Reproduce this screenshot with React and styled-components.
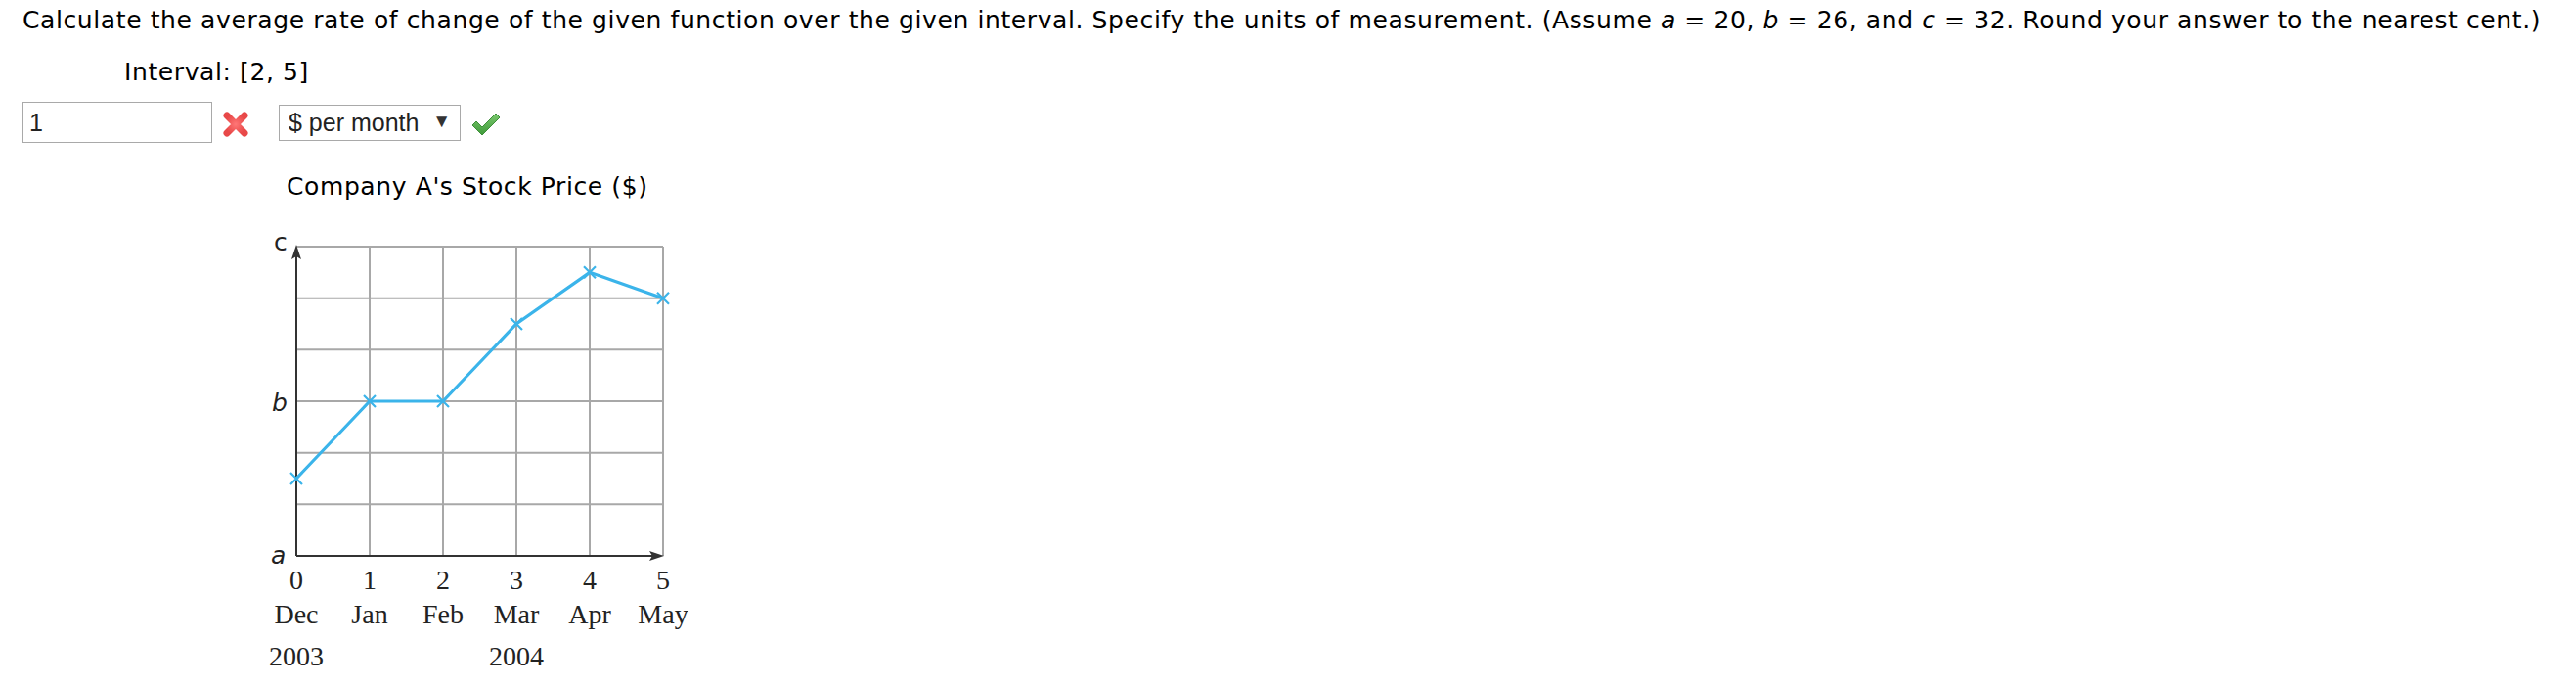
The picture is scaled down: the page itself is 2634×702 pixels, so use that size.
import React from "react";
import styled, { createGlobalStyle } from "styled-components";

const GlobalStyle = createGlobalStyle`
  html, body {
    margin: 0;
    padding: 0;
    background: #fff;
  }
  body {
    font-family: "DejaVu Sans", Verdana, sans-serif;
    color: #000;
  }
`;

const Page = styled.main`
  padding: 3px 0 0 23px;
`;

const Question = styled.p`
  margin: 0;
  font-size: 25px;
  letter-spacing: 0.6px;
  line-height: 36px;
  white-space: nowrap;
  i {
    font-style: italic;
  }
`;

const Interval = styled.p`
  margin: 17px 0 0 104px;
  font-size: 25px;
  letter-spacing: 0.6px;
  line-height: 36px;
`;

const AnswerRow = styled.div`
  display: flex;
  align-items: center;
  margin-top: 12px;
  height: 42px;
`;

const TextBox = styled.div`
  box-sizing: border-box;
  width: 194px;
  height: 42px;
  border: 1.5px solid #a9a9a9;
  padding: 0 6px;
  display: flex;
  align-items: center;
  font-family: "Liberation Sans", Arial, sans-serif;
  font-size: 25px;
  color: #222;
`;

const Mark = styled.span`
  display: inline-flex;
  margin-left: ${(p) => p.$gap}px;
  margin-top: 4px;
`;

const Select = styled.div`
  box-sizing: border-box;
  height: 37px;
  width: 186px;
  margin-left: 30px;
  border: 1.5px solid #a9a9a9;
  display: flex;
  align-items: center;
  justify-content: space-between;
  padding: 0 9px 0 9px;
  font-family: "Liberation Sans", Arial, sans-serif;
  font-size: 25px;
  color: #222;
`;

const Caret = styled.span`
  font-size: 19px;
  color: #333;
  margin-top: -3px;
`;

const Figure = styled.figure`
  margin: 27px 0 0 270px;
`;

const Caption = styled.figcaption`
  font-size: 25px;
  letter-spacing: 0.6px;
  line-height: 36px;
`;

const Chart = styled.svg`
  display: block;
  margin: 20px 0 0 -33px;
`;

const Cross = () => (
  <svg width="28" height="28" viewBox="0 0 28 28">
    <defs>
      <radialGradient id="xg" cx="50%" cy="50%" r="60%">
        <stop offset="0%" stopColor="#f77" />
        <stop offset="100%" stopColor="#e84848" />
      </radialGradient>
    </defs>
    <path
      d="M5 5 L23 23 M23 5 L5 23"
      stroke="url(#xg)"
      strokeWidth="7"
      strokeLinecap="round"
      fill="none"
    />
  </svg>
);

const Check = () => (
  <svg width="32" height="26" viewBox="0 0 32 26">
    <defs>
      <linearGradient id="cg" x1="0" y1="0" x2="0" y2="1">
        <stop offset="0%" stopColor="#7cc96f" />
        <stop offset="100%" stopColor="#3f9a3a" />
      </linearGradient>
    </defs>
    <path
      d="M2 14 L6 10 L12 16 L26 2 L30 6 L12 24 Z"
      fill="url(#cg)"
      stroke="#3e8f3a"
      strokeWidth="1"
      strokeLinejoin="round"
    />
  </svg>
);

const AXIS_X = 43;
const TOP = 23;
const BOTTOM = 339;
const STEP_X = 75;
const valueToY = (v) => BOTTOM - ((v - 20) / 12) * (BOTTOM - TOP);

const prices = [23, 26, 26, 29, 31, 30];
const months = ["Dec", "Jan", "Feb", "Mar", "Apr", "May"];

const StockChart = () => {
  const xs = prices.map((_, i) => AXIS_X + i * STEP_X);
  const rows = [0, 1, 2, 3, 4, 5, 6].map((i) => TOP + (i * (BOTTOM - TOP)) / 6);
  const pts = prices.map((p, i) => [xs[i], valueToY(p)]);
  return (
    <Chart width="470" height="470" viewBox="0 0 470 470">
      {xs.slice(1).map((x) => (
        <line key={x} x1={x} y1={TOP} x2={x} y2={BOTTOM} stroke="#a8a8a8" strokeWidth="2" />
      ))}
      {rows.slice(0, 6).map((y) => (
        <line key={y} x1={AXIS_X} y1={y} x2={xs[5]} y2={y} stroke="#a8a8a8" strokeWidth="2" />
      ))}
      <line x1={AXIS_X} y1={BOTTOM} x2={AXIS_X} y2={TOP + 4} stroke="#333" strokeWidth="2" />
      <line x1={AXIS_X} y1={BOTTOM} x2={xs[5] - 4} y2={BOTTOM} stroke="#333" strokeWidth="2" />
      <path d={`M${AXIS_X} ${TOP - 2} L${AXIS_X + 5} ${TOP + 13} L${AXIS_X} ${TOP + 10} L${AXIS_X - 5} ${TOP + 13} Z`} fill="#333" />
      <path d={`M${xs[5] + 1} ${BOTTOM} L${xs[5] - 14} ${BOTTOM - 5} L${xs[5] - 11} ${BOTTOM} L${xs[5] - 14} ${BOTTOM + 5} Z`} fill="#333" />
      <polyline
        points={pts.map((p) => p.join(",")).join(" ")}
        fill="none"
        stroke="#3bb4ea"
        strokeWidth="3.2"
      />
      {pts.map(([x, y]) => (
        <path
          key={x}
          d={`M${x - 6} ${y - 6} L${x + 6} ${y + 6} M${x + 6} ${y - 6} L${x - 6} ${y + 6}`}
          stroke="#3bb4ea"
          strokeWidth="2.2"
        />
      ))}
      <g fontFamily="'DejaVu Sans', sans-serif" fontSize="25" fill="#222">
        <text x="20" y="27">c</text>
        <text x="18" y="191" fontStyle="italic">b</text>
        <text x="17" y="347" fontStyle="italic">a</text>
      </g>
      <g fontFamily="'Liberation Serif', 'Times New Roman', serif" fontSize="28" fill="#222" textAnchor="middle">
        {xs.map((x, i) => (
          <text key={"n" + i} x={x} y="373">{i}</text>
        ))}
        {xs.map((x, i) => (
          <text key={"m" + i} x={x} y="408">{months[i]}</text>
        ))}
        <text x={xs[0]} y="451">2003</text>
        <text x={xs[3]} y="451">2004</text>
      </g>
    </Chart>
  );
};

export default function App() {
  return (
    <>
      <GlobalStyle />
      <Page>
        <Question>
          Calculate the average rate of change of the given function over the given
          interval. Specify the units of measurement. (Assume <i>a</i> = 20, <i>b</i> = 26,
          and <i>c</i> = 32. Round your answer to the nearest cent.)
        </Question>
        <Interval>Interval: [2, 5]</Interval>
        <AnswerRow>
          <TextBox>1</TextBox>
          <Mark $gap={10}>
            <Cross />
          </Mark>
          <Select>
            <span>$ per month</span>
            <Caret>▼</Caret>
          </Select>
          <Mark $gap={10}>
            <Check />
          </Mark>
        </AnswerRow>
        <Figure>
          <Caption>Company A's Stock Price ($)</Caption>
          <StockChart />
        </Figure>
      </Page>
    </>
  );
}
